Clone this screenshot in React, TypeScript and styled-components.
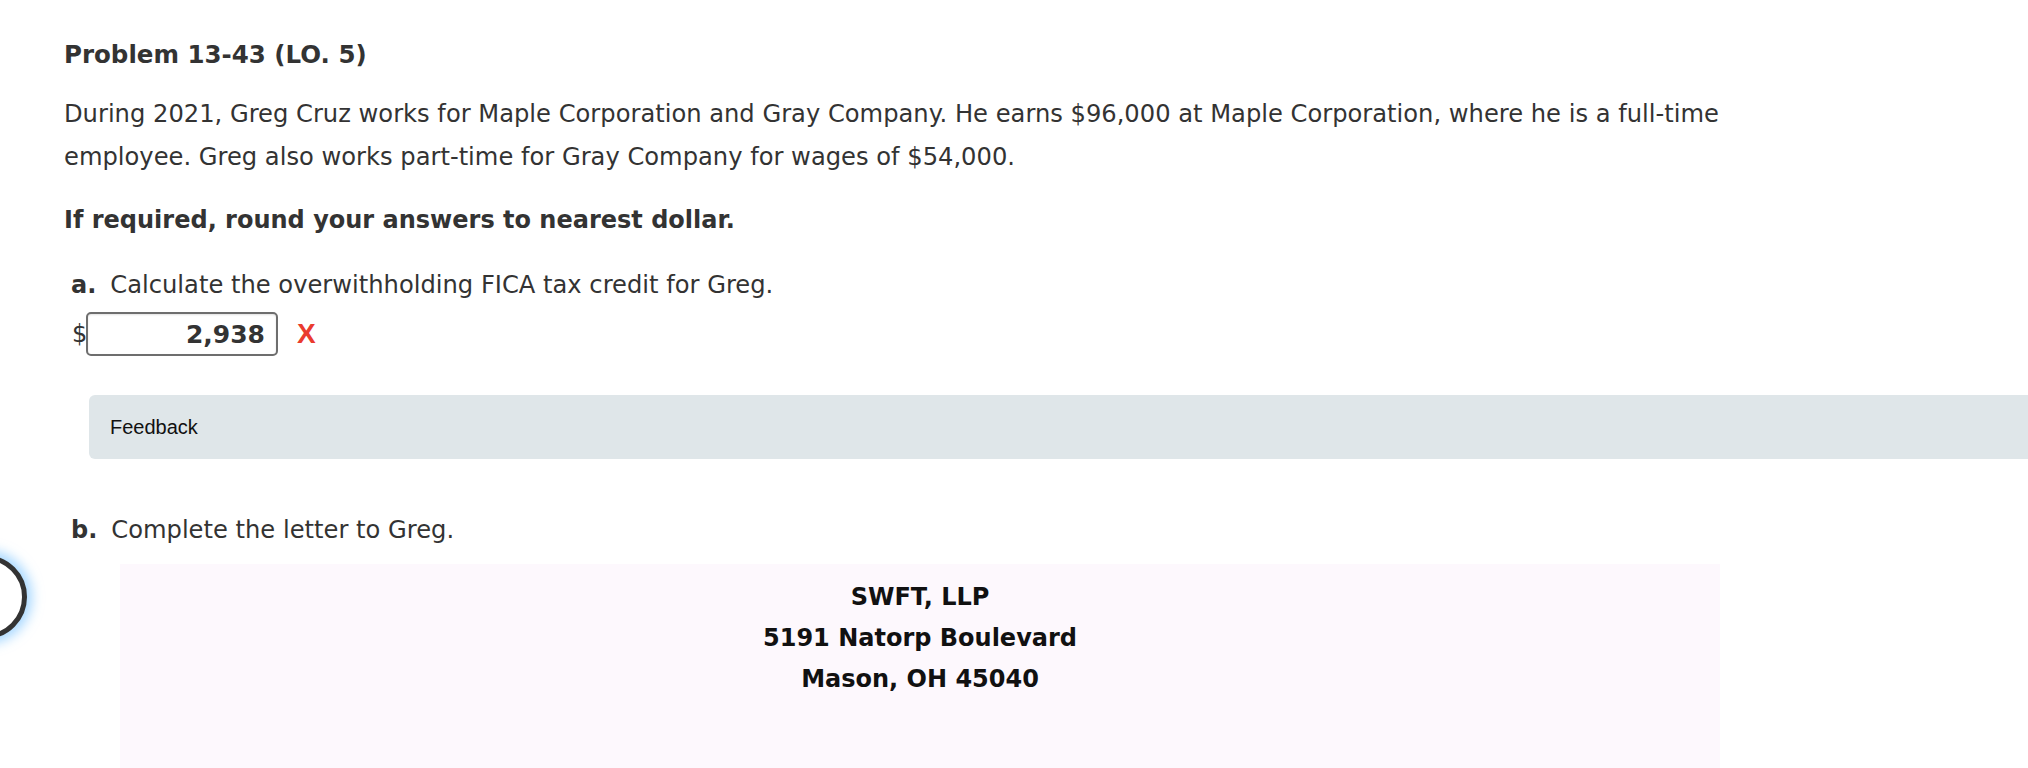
import React, { FC } from 'react';
import styled, { createGlobalStyle } from 'styled-components';

const GlobalStyle = createGlobalStyle`
  html, body {
    margin: 0;
    padding: 0;
    background: #ffffff;
    overflow: hidden;
  }
`;

const Page = styled.div`
  position: relative;
  width: 2028px;
  height: 768px;
  overflow: hidden;
  padding-left: 64px;
  box-sizing: border-box;
  font-family: 'DejaVu Sans', Verdana, sans-serif;
  color: #333333;
`;

const Title = styled.h2`
  margin: 33px 0 0;
  font-size: 24.5px;
  line-height: 43px;
  font-weight: bold;
`;

const Paragraph = styled.p<{ $bold?: boolean; $top: number }>`
  margin: ${(p) => p.$top}px 0 0;
  max-width: 1720px;
  font-size: ${(p) => (p.$bold ? 24 : 24.2)}px;
  font-weight: ${(p) => (p.$bold ? 'bold' : 'normal')};
  line-height: 43px;
`;

const Part = styled.div<{ $top: number }>`
  margin: ${(p) => p.$top}px 0 0 7px;
  display: flex;
  align-items: center;
  gap: 14px;
  font-size: 24.2px;
  line-height: 43px;
`;

const PartLabel = styled.span`
  font-weight: bold;
  font-size: 24px;
`;

const AnswerRow = styled.div`
  margin: 5px 0 0 8px;
  display: flex;
  align-items: center;
  height: 44px;
`;

const Dollar = styled.span`
  font-size: 24px;
  width: 14px;
`;

const AnswerBox = styled.div`
  width: 192px;
  height: 44px;
  box-sizing: border-box;
  border: 2px solid #6e6e6e;
  border-radius: 5px;
  box-shadow: inset 0 1px 2px rgba(0, 0, 0, 0.12);
  display: flex;
  align-items: center;
  justify-content: flex-end;
  padding-right: 11px;
  font-size: 25px;
  font-weight: bold;
  color: #333333;
`;

const WrongMark = styled.span`
  margin-left: 19px;
  font-family: 'Liberation Sans', Arial, sans-serif;
  font-weight: bold;
  font-size: 28px;
  color: #ea3b2e;
`;

const Feedback = styled.div`
  margin: 39px -60px 0 25px;
  height: 64px;
  background: #dfe6e9;
  border-radius: 6px;
  display: flex;
  align-items: center;
  padding-left: 21px;
  font-family: 'Liberation Sans', Arial, sans-serif;
  font-size: 20px;
  color: #111111;
`;

const Letter = styled.div`
  margin: 12px 0 0 56px;
  width: 1600px;
  height: 220px;
  background: #fdf8fd;
  padding-top: 13px;
  box-sizing: border-box;
  display: flex;
  flex-direction: column;
  align-items: center;
`;

const LetterLine = styled.div`
  font-size: 24px;
  font-weight: bold;
  line-height: 41px;
  color: #111111;
`;

const FocusRing = styled.div`
  position: absolute;
  left: -57px;
  top: 555px;
  width: 84px;
  height: 84px;
  box-sizing: border-box;
  border: 5px solid #333333;
  border-radius: 50%;
  background: #ffffff;
  box-shadow: 0 0 12px 5px rgba(110, 190, 255, 0.6);
`;

const App: FC = () => (
  <Page>
    <GlobalStyle />
    <FocusRing />
    <Title>Problem 13-43 (LO. 5)</Title>
    <Paragraph $top={17}>
      During 2021, Greg Cruz works for Maple Corporation and Gray Company. He earns $96,000 at
      Maple Corporation, where he is a full-time employee. Greg also works part-time for Gray
      Company for wages of $54,000.
    </Paragraph>
    <Paragraph $top={20} $bold>If required, round your answers to nearest dollar.</Paragraph>
    <Part $top={22}>
      <PartLabel>a.</PartLabel>
      <span>Calculate the overwithholding FICA tax credit for Greg.</span>
    </Part>
    <AnswerRow>
      <Dollar>$</Dollar>
      <AnswerBox>2,938</AnswerBox>
      <WrongMark>X</WrongMark>
    </AnswerRow>
    <Feedback>Feedback</Feedback>
    <Part $top={50}>
      <PartLabel>b.</PartLabel>
      <span>Complete the letter to Greg.</span>
    </Part>
    <Letter>
      <LetterLine>SWFT, LLP</LetterLine>
      <LetterLine>5191 Natorp Boulevard</LetterLine>
      <LetterLine>Mason, OH 45040</LetterLine>
    </Letter>
  </Page>
);

export default App;
